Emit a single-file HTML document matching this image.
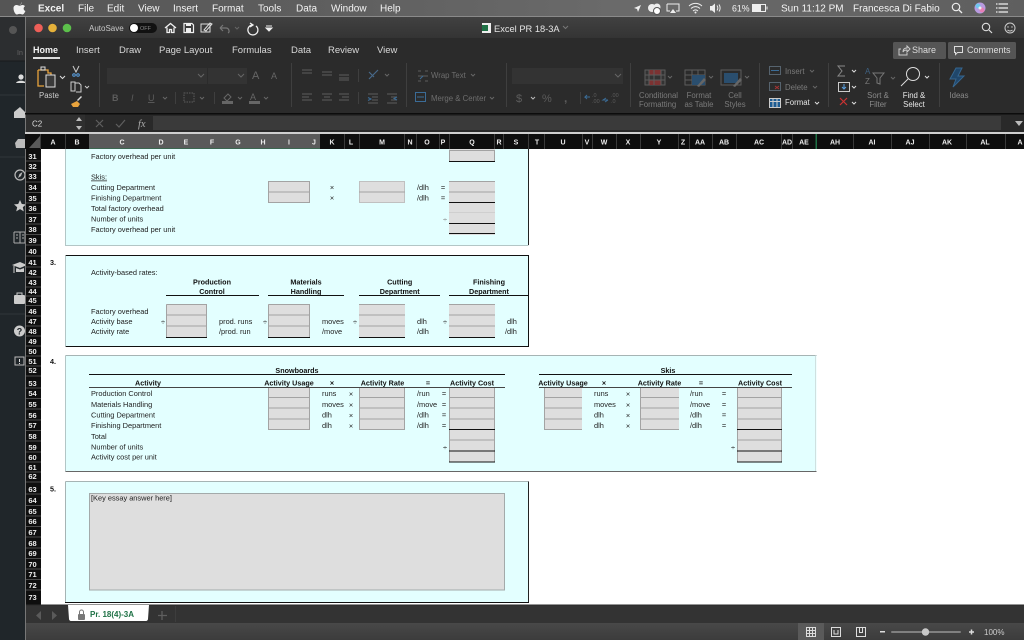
<!DOCTYPE html>
<html><head><meta charset="utf-8"><title>Excel PR 18-3A</title>
<style>
html,body{margin:0;padding:0;width:1024px;height:640px;overflow:hidden;background:#fff}
svg{display:block;position:absolute;left:0;top:0}
text{font-family:"Liberation Sans",sans-serif}
.m{font-size:10px;fill:#f4f4f4}
.tab{font-size:9.500px;fill:#d8d8d8}
.rb{font-size:7.800px;fill:#b8b8b8}
.dim{font-size:7.500px;fill:#7a7a7a}
.ch{font-size:7px;font-weight:bold;fill:#eee;text-anchor:middle}
.rn{font-size:7.500px;font-weight:bold;fill:#eee;text-anchor:middle}
.t{font-size:7.400px;fill:#222}
.c{font-size:7.400px;fill:#222;text-anchor:middle}
.b{font-size:7.200px;fill:#111;font-weight:bold}
.bc{font-size:7.200px;fill:#111;font-weight:bold;text-anchor:middle}
.cell{fill:#dedede}
.g{stroke:#a3a3a3;stroke-width:1;fill:none}
.k{stroke:#111;stroke-width:1;fill:none}
</style></head><body>
<svg width="1024" height="640" viewBox="0 0 1024 640" xmlns="http://www.w3.org/2000/svg">
<defs>
<linearGradient id="menu" x1="0" x2="1" y1="0" y2="0"><stop offset="0" stop-color="#555"/><stop offset=".3" stop-color="#5e5e5e"/><stop offset=".6" stop-color="#6a6a6a"/><stop offset="1" stop-color="#5f5f5f"/></linearGradient>
<linearGradient id="title" x1="0" x2="0" y1="0" y2="1"><stop offset="0" stop-color="#414141"/><stop offset="1" stop-color="#343434"/></linearGradient>
<linearGradient id="stat" x1="0" x2="0" y1="0" y2="1"><stop offset="0" stop-color="#484848"/><stop offset="1" stop-color="#3c3c3c"/></linearGradient>
</defs>

<!-- background sidebar -->
<rect x="0" y="17" width="25" height="623" fill="#20262a"/>
<rect x="0" y="17" width="25" height="44" fill="#2c2e30"/>
<circle cx="13" cy="30" r="4" fill="#555"/>
<text x="17" y="55" style="font-size:7px;fill:#666">In</text>
<line x1="0" y1="61" x2="25" y2="61" stroke="#171a1c"/>
<line x1="0" y1="95" x2="25" y2="95" stroke="#30363a"/>
<line x1="0" y1="157" x2="25" y2="157" stroke="#30363a"/>
<line x1="0" y1="314" x2="25" y2="314" stroke="#30363a"/>
<circle cx="21" cy="77" r="2.600" fill="#ddd"/><path d="M16 83c1-3 9-3 10 0z" fill="#ddd"/>
<path d="M14 112l6-5 5 5v6h-11z" fill="#ccc"/>
<path d="M15 143l3-4h7v9h-9z" fill="#bbb"/>
<circle cx="20" cy="175" r="5" fill="none" stroke="#bbb" stroke-width="1.200"/><path d="M18 178l1.500-4 3-2-1.500 4z" fill="#bbb"/>
<path d="M20 200l1.800 4 4.200.4-3.200 2.800 1 4.200-3.800-2.300-3.800 2.300 1-4.200-3.200-2.800 4.200-.4z" fill="#ccc"/>
<path d="M20 232v11M14 232h6M14 243h6M14 232v11M20 232h5v11h-5M16 235h2M16 238h2M22 235h2M22 238h2" stroke="#aaa" stroke-width="1" fill="none"/>
<path d="M12 265l8-3 7 3-7 3z" fill="#ccc"/><path d="M16 268v4h8v-4l-4 1.500z" fill="#ccc"/><path d="M14 266v7" stroke="#ccc"/>
<rect x="14" y="295" width="11" height="9" rx="1" fill="#ccc"/><rect x="17" y="293" width="5" height="3" fill="none" stroke="#ccc"/>
<circle cx="19.500" cy="331" r="5.500" fill="#ccc"/><text x="19.500" y="334.500" text-anchor="middle" style="font-size:9px;font-weight:bold;fill:#20262a">?</text>
<rect x="15" y="357" width="9" height="8" fill="none" stroke="#bbb"/><path d="M19.500 359v3M19.500 363v1" stroke="#ddd"/>

<!-- menu bar -->
<rect width="1024" height="17" fill="url(#menu)"/>
<line x1="0" y1="16.500" x2="1024" y2="16.500" stroke="#8a8a8a"/>
<path d="M19.500 4.500c1.200-.3 2.300-1.400 2.500-2.800.3 1.500-1.100 3-2.500 2.800zM16.500 5c1.400 0 2.100.7 3.100.7s1.800-.8 3.100-.7c1 0 1.800.5 2.300 1.200-2 1.300-1.700 4 .4 4.800-.6 1.600-1.800 3.500-2.900 3.500-1 0-1.500-.6-2.800-.6s-1.800.6-2.800.6c-1.600 0-3.400-3.500-3.400-6.300 0-2 1.400-3.200 3-3.200z" fill="#f2f2f2"/>
<text x="38" y="11.500" class="m" style="font-weight:bold">Excel</text>
<text x="78" y="11.500" class="m">File</text>
<text x="107" y="11.500" class="m">Edit</text>
<text x="138" y="11.500" class="m">View</text>
<text x="173" y="11.500" class="m">Insert</text>
<text x="212" y="11.500" class="m">Format</text>
<text x="258" y="11.500" class="m">Tools</text>
<text x="296" y="11.500" class="m">Data</text>
<text x="331" y="11.500" class="m">Window</text>
<text x="380" y="11.500" class="m">Help</text>
<path d="M634 8l7-3-3 7-1-3z" fill="#eee"/>
<circle cx="652" cy="8" r="4" fill="#eee"/><circle cx="657" cy="7" r="3.500" fill="#eee"/><circle cx="657" cy="11" r="3.500" fill="#fff" stroke="#555"/>
<path d="M667 4h12v7h-3M670 11h-3v-7" stroke="#eee" fill="none"/><path d="M670 13l3-4 3 4z" fill="#eee"/>
<path d="M689 6c4-3.500 9-3.500 13 0M691 8.500c3-2.500 6-2.500 9 0M693 11c2-1.500 3-1.500 5 0" stroke="#eee" fill="none"/><circle cx="695.500" cy="12.500" r="1" fill="#eee"/>
<path d="M710 6h2l3-2.500v9.500l-3-2.500h-2z" fill="#eee"/><path d="M717 5.500c1 1.500 1 3.500 0 5M719 4.500c1.500 2 1.500 5 0 7" stroke="#eee" fill="none"/>
<text x="732" y="11.500" class="m" style="font-size:8.800px">61%</text>
<rect x="752.500" y="4.500" width="13" height="7" fill="none" stroke="#eee"/><rect x="753" y="5" width="8" height="6" fill="#eee"/><rect x="766.500" y="6.500" width="1" height="3" fill="#eee"/>
<text x="781" y="11.500" class="m">Sun 11:12 PM</text>
<text x="853" y="11.500" class="m">Francesca Di Fabio</text>
<circle cx="956" cy="7" r="3.700" fill="none" stroke="#eee" stroke-width="1.200"/><path d="M959 10l3 3" stroke="#eee" stroke-width="1.300"/>
<circle cx="980" cy="8" r="5.500" fill="#b89be0"/><circle cx="978" cy="6" r="2.500" fill="#6fc6ef"/><circle cx="982" cy="10" r="2.500" fill="#e77fb5"/><circle cx="980" cy="8" r="1.500" fill="#eee"/>
<path d="M996 4h12M996 8h12M996 12h12" stroke="#eee" stroke-width="1.200" stroke-dasharray="1.500 1 10"/>

<!-- title bar -->
<rect x="25" y="17" width="999" height="21" fill="url(#title)"/>
<rect x="25" y="38" width="999" height="75" fill="#2b2b2b"/>
<line x1="25.500" y1="17" x2="25.500" y2="640" stroke="#777"/>
<circle cx="38.500" cy="28" r="4.300" fill="#ee5f58"/><circle cx="52.500" cy="28" r="4.300" fill="#e5b13a"/><circle cx="67" cy="28" r="4.300" fill="#5cc04b"/>
<text x="89" y="31" style="font-size:8px;fill:#c8c8c8">AutoSave</text>
<rect x="129" y="23" width="28" height="10" rx="5" fill="#111"/><circle cx="134" cy="28" r="4" fill="#fff"/><text x="140" y="30.200" style="font-size:5.500px;fill:#888">OFF</text>
<path d="M165 28l5.500-4.500 5.500 4.500M167 27.500v5h2.500v-3h2v3h2.500v-5" stroke="#f0f0f0" stroke-width="1.300" fill="none"/>
<path d="M184 23.500h8l1.500 1.500v7.500h-9.500z" stroke="#f0f0f0" stroke-width="1.200" fill="none"/><rect x="186" y="28" width="5" height="4" fill="#f0f0f0"/><rect x="186" y="24" width="5" height="2" fill="#f0f0f0"/>
<path d="M201 24h9v8h-9zM204 30l6-7 2 1-6 7z" stroke="#ddd" stroke-width="1" fill="none"/>
<path d="M220 28l3-3M220 28l3 3M220 28h6c3 0 4 4 2 5" stroke="#777" stroke-width="1.200" fill="none"/><path d="M235 27l2 2 2-2" stroke="#666" fill="none"/>
<path d="M252 25a5 5 0 1 0 4 1M250 23l3 2-3 2" stroke="#f0f0f0" stroke-width="1.300" fill="none"/>
<path d="M266 26h6M266 28l3 3 3-3z" stroke="#eee" fill="#eee"/>
<rect x="482" y="23" width="9" height="10" fill="#eee"/><rect x="482" y="25" width="6" height="6" fill="#1e7145"/>
<text x="494" y="32" style="font-size:9.300px;fill:#e4e4e4">Excel PR 18-3A</text>
<path d="M563 26l2.500 2.500 2.500-2.500" stroke="#777" fill="none"/>
<circle cx="986" cy="27" r="3.700" fill="none" stroke="#ddd" stroke-width="1.100"/><path d="M989 30l3 3" stroke="#ddd" stroke-width="1.200"/>
<circle cx="1010" cy="28" r="5" fill="none" stroke="#ccc"/><circle cx="1008" cy="27" r=".7" fill="#ccc"/><circle cx="1012" cy="27" r=".7" fill="#ccc"/><path d="M1007.500 30c1.500 1.200 3.500 1.200 5 0" stroke="#ccc" fill="none"/>

<!-- tabs -->
<text x="33" y="53" class="tab" style="font-weight:bold;font-size:9px;fill:#f2f2f2">Home</text>
<rect x="33" y="57" width="27" height="2" fill="#ddd"/>
<text x="76" y="53" class="tab">Insert</text>
<text x="119" y="53" class="tab">Draw</text>
<text x="159" y="53" class="tab">Page Layout</text>
<text x="232" y="53" class="tab">Formulas</text>
<text x="291" y="53" class="tab">Data</text>
<text x="328" y="53" class="tab">Review</text>
<text x="377" y="53" class="tab">View</text>
<rect x="893" y="42" width="53" height="17" rx="1.500" fill="#555"/>
<path d="M901 49h-2v6h8v-2M903 52c0-3 2-4 4-4v-2l3 3-3 3v-2c-1 0-3 0-4 2z" stroke="#ccc" fill="none"/>
<text x="912" y="53" class="tab" style="font-size:9px;fill:#ddd">Share</text>
<rect x="948" y="42" width="68" height="17" rx="1.500" fill="#555"/>
<path d="M954.500 46.500h8v6h-5l-2 2v-2h-1z" stroke="#ddd" fill="none"/>
<text x="967" y="53" class="tab" style="font-size:9px;fill:#ddd">Comments</text>

<!-- ribbon: clipboard -->
<path d="M38 70h10v3h3v6M38 70v16h6" stroke="#e8a33d" stroke-width="1.300" fill="none"/><rect x="41" y="67" width="4" height="3" fill="none" stroke="#ddd"/>
<rect x="46" y="75" width="9" height="12" fill="#3a3a3a" stroke="#ddd"/>
<path d="M60 76l2.500 2.500 2.500-2.500" stroke="#ddd" fill="none"/>
<text x="39" y="98" class="rb" style="fill:#ccc">Paste</text>
<path d="M73 66l3 6 3-6M79 66l-3 6" stroke="#ccc" fill="none"/><circle cx="74" cy="75" r="1.300" fill="none" stroke="#5aa0e0"/><circle cx="78" cy="75" r="1.300" fill="none" stroke="#5aa0e0"/>
<path d="M71 82h4v9h-4zM75 83h4l2 2v7h-5" stroke="#ccc" fill="none"/><path d="M85 86l2 2 2-2" stroke="#ccc" fill="none"/>
<path d="M71 104l6-3 3 3-2 3h-5z" fill="#e8a33d"/><path d="M77 100l4-4 1 1-4 4z" fill="#ddd"/>
<line x1="99.500" y1="63" x2="99.500" y2="107" stroke="#3f3f3f"/>
<!-- font -->
<rect x="107" y="68" width="100" height="16" fill="#333"/><rect x="208" y="68" width="39" height="16" fill="#333"/>
<path d="M198 74l3 3 3-3M238 74l3 3 3-3" stroke="#666" fill="none"/>
<text x="252" y="79" class="dim" style="font-size:11px;fill:#666">A</text><text x="271" y="79" class="dim" style="font-size:9px;fill:#666">A</text>
<text x="112" y="101" class="dim" style="font-size:9px;font-weight:bold;fill:#5c5c5c">B</text>
<text x="131" y="101" class="dim" style="font-size:9px;font-style:italic;fill:#5c5c5c">I</text>
<text x="148" y="101" class="dim" style="font-size:9px;text-decoration:underline;fill:#5c5c5c">U</text>
<path d="M163 97l2 2 2-2M200 97l2 2 2-2M238 97l2 2 2-2M264 97l2 2 2-2" stroke="#666" fill="none"/>
<line x1="175.500" y1="92" x2="175.500" y2="104" stroke="#3f3f3f"/>
<rect x="184" y="93" width="10" height="9" stroke="#5c5c5c" stroke-dasharray="1.500 1" fill="none"/>
<line x1="214.500" y1="92" x2="214.500" y2="104" stroke="#3f3f3f"/>
<path d="M224 98l4-4 3 3-4 4z" fill="none" stroke="#666"/><rect x="222" y="101" width="11" height="3" fill="#666"/>
<text x="250" y="100" style="font-size:9px;fill:#666">A</text><rect x="249" y="101" width="11" height="3" fill="#666"/>
<line x1="291.500" y1="63" x2="291.500" y2="107" stroke="#3f3f3f"/>
<!-- alignment -->
<path d="M302 70h10M302 73h10M322 72h10M322 75h10M339 75h10M339 78h10M339 80h10" stroke="#5c5c5c" fill="none"/>
<path d="M302 94h10M302 97h7M302 100h10M322 94h10M324 97h6M322 100h10M339 94h10M342 97h7M339 100h10" stroke="#5c5c5c" fill="none"/>
<line x1="358.500" y1="69" x2="358.500" y2="82" stroke="#3f3f3f"/><line x1="358.500" y1="92" x2="358.500" y2="104" stroke="#3f3f3f"/>
<path d="M369 79l9-9M369 72l5 5" stroke="#47698a" stroke-width="1.200" fill="none"/><path d="M385 74l2 2 2-2" stroke="#666" fill="none"/>
<path d="M368 94h10M372 97h6M372 100h6M368 103h10M387 94h10M391 97h6M391 100h6M387 103h10" stroke="#5c5c5c" fill="none"/><path d="M368 97.500l3 1.500-3 1.500M397 97l-3 1.500 3 1.500" stroke="#3b6c97" fill="none"/>
<line x1="406.500" y1="63" x2="406.500" y2="107" stroke="#3f3f3f"/>
<path d="M418 71h3M425 71h3M418 81h3M425 81h3M418 76h10" stroke="#5c5c5c" fill="none"/><path d="M423 76l-3 3" stroke="#3b6c97" fill="none"/>
<text x="431" y="78" class="rb" style="fill:#6e6e6e">Wrap Text</text>
<path d="M471 74l2 2 2-2" stroke="#666" fill="none"/>
<rect x="415.500" y="92.500" width="10" height="9" stroke="#3b6c97" fill="none"/><path d="M417 97h7" stroke="#3b6c97"/>
<text x="431" y="101" class="rb" style="fill:#6e6e6e">Merge &amp; Center</text>
<path d="M490 97l2 2 2-2" stroke="#666" fill="none"/>
<line x1="506.500" y1="63" x2="506.500" y2="107" stroke="#3f3f3f"/>
<!-- number -->
<rect x="512" y="68" width="111" height="16" fill="#333"/><path d="M615 74l3 3 3-3" stroke="#666" fill="none"/>
<text x="516" y="102" style="font-size:11px;fill:#5c5c5c">$</text><path d="M531 97l2 2 2-2" stroke="#bbb" fill="none"/>
<text x="542" y="102" style="font-size:11px;fill:#5c5c5c">%</text><text x="564" y="102" style="font-size:12px;font-weight:bold;fill:#5c5c5c">,</text>
<line x1="580.500" y1="92" x2="580.500" y2="104" stroke="#3f3f3f"/>
<path d="M590 97h-5l2-2M585 97l2 2M608 100h-5l3-2M608 100l-3 2" stroke="#3b6c97" fill="none"/>
<text x="592" y="97" style="font-size:5.500px;fill:#5c5c5c">.0</text><text x="592" y="103" style="font-size:5.500px;fill:#5c5c5c">.00</text>
<text x="611" y="97" style="font-size:5.500px;fill:#5c5c5c">.00</text><text x="611" y="103" style="font-size:5.500px;fill:#5c5c5c">.0</text>
<line x1="630.500" y1="63" x2="630.500" y2="107" stroke="#3f3f3f"/>
<!-- styles -->
<rect x="645" y="70" width="20" height="15" fill="#333" stroke="#5c5c5c"/><rect x="649" y="70" width="12" height="5" fill="#7c3232"/><rect x="649" y="80" width="12" height="5" fill="#7c3232"/><path d="M645 75h20M645 80h20M649 70v15M654 70v15M661 70v15" stroke="#5c5c5c" fill="none"/>
<path d="M668 76l2 2 2-2M709 76l2 2 2-2M745 76l2 2 2-2" stroke="#666" fill="none"/>
<rect x="685" y="70" width="20" height="15" fill="none" stroke="#5c5c5c"/><path d="M685 75h20M685 80h20M692 70v15M698 70v15" stroke="#5c5c5c"/><rect x="692" y="75" width="13" height="10" fill="#2a4e6e"/><path d="M697 86l7-8 2 2-7 7z" fill="#666"/>
<rect x="721" y="70" width="20" height="15" fill="none" stroke="#5c5c5c"/><rect x="724" y="73" width="14" height="10" fill="#2a4e6e"/><path d="M733 86l7-8 2 2-7 7z" fill="#666"/>
<text x="639" y="98" class="rb" style="fill:#7a7a7a">Conditional</text><text x="639" y="107" class="rb" style="fill:#7a7a7a">Formatting</text>
<text x="699" y="98" class="rb" text-anchor="middle" style="fill:#7a7a7a">Format</text><text x="699" y="107" class="rb" text-anchor="middle" style="fill:#7a7a7a">as Table</text>
<text x="735" y="98" class="rb" text-anchor="middle" style="fill:#7a7a7a">Cell</text><text x="735" y="107" class="rb" text-anchor="middle" style="fill:#7a7a7a">Styles</text>
<line x1="759.500" y1="63" x2="759.500" y2="107" stroke="#3f3f3f"/>
<rect x="769.500" y="66.500" width="11" height="8" fill="none" stroke="#56636e"/><path d="M771 70.500h8" stroke="#3b6c97"/>
<text x="785" y="74" class="rb" style="fill:#7a7a7a">Insert</text><path d="M810 70l2 2 2-2" stroke="#666" fill="none"/>
<rect x="769.500" y="82.500" width="11" height="8" fill="none" stroke="#56636e"/><path d="M775 86l4 3M779 86l-4 3" stroke="#a33"/>
<text x="785" y="90" class="rb" style="fill:#7a7a7a">Delete</text><path d="M813 86l2 2 2-2" stroke="#666" fill="none"/>
<rect x="769.500" y="98.500" width="11" height="9" fill="#1c5b92" stroke="#ccc"/><path d="M769.500 101.500h11M773 98v9M777 98v9" stroke="#ccc"/>
<text x="785" y="105" class="rb" style="fill:#e4e4e4">Format</text><path d="M815 102l2 2 2-2" stroke="#ddd" fill="none"/>
<line x1="828.500" y1="63" x2="828.500" y2="107" stroke="#3f3f3f"/>
<path d="M845 66h-7l4 5-4 5h7" stroke="#888" fill="none"/><path d="M852 70l2 2 2-2M852 86l2 2 2-2M852 102l2 2 2-2" stroke="#ddd" fill="none"/>
<rect x="838.500" y="82.500" width="11" height="9" fill="none" stroke="#ccc"/><path d="M844 84v5M842 87l2 2 2-2" stroke="#5aa0e0" fill="none"/>
<path d="M840 98l7 7M847 98l-7 7" stroke="#c33" stroke-width="1.200"/>
<text x="865" y="74" style="font-size:8px;fill:#3f6181">A</text><text x="865" y="84" style="font-size:8px;fill:#777">Z</text>
<path d="M873 73h11l-4 5v6l-3-1v-5z" stroke="#777" fill="none"/><path d="M891 77l2 2 2-2" stroke="#666" fill="none"/>
<text x="878" y="98" class="rb" text-anchor="middle" style="fill:#8a8a8a">Sort &amp;</text><text x="878" y="107" class="rb" text-anchor="middle" style="fill:#8a8a8a">Filter</text>
<circle cx="913" cy="74" r="6.500" fill="none" stroke="#ddd"/><path d="M908 79l-7 7" stroke="#ddd"/>
<path d="M925 76l2 2 2-2" stroke="#ddd" fill="none"/>
<text x="914" y="98" class="rb" text-anchor="middle" style="fill:#e8e8e8">Find &amp;</text><text x="914" y="107" class="rb" text-anchor="middle" style="fill:#e8e8e8">Select</text>
<line x1="939.500" y1="63" x2="939.500" y2="107" stroke="#3f3f3f"/>
<path d="M962 68h-6l-6 11h6l-3 8 11-11h-6z" fill="#20476b" stroke="#36668f"/>
<text x="959" y="98" class="rb" text-anchor="middle" style="fill:#8a8a8a">Ideas</text>

<!-- formula bar -->
<rect x="25" y="113" width="999" height="1.500" fill="#0c0c0c"/>
<rect x="26" y="114.500" width="998" height="18" fill="#292929"/>
<rect x="26" y="114.500" width="59" height="18" fill="#2f2f2f"/>
<text x="32" y="126.500" style="font-size:8px;fill:#ddd">C2</text>
<path d="M76 121l3-4 3 4zM76 126l3 4 3-4z" fill="#bbb"/>
<path d="M96 120l7 7M103 120l-7 7" stroke="#5f5f5f" stroke-width="1.200"/>
<path d="M116 124l3 3 6-7" stroke="#5f5f5f" stroke-width="1.200" fill="none"/>
<text x="138" y="127" style="font-family:'Liberation Serif',serif;font-size:10.500px;font-style:italic;fill:#aaa">fx</text>
<rect x="153" y="116" width="848" height="14" fill="#3a3a3a"/>
<path d="M1015 121h8l-4 5z" fill="#bbb"/>
<rect x="25" y="132" width="999" height="2" fill="#cfcfcf"/>

<!-- column headers -->
<rect x="25" y="134" width="999" height="15" fill="#0e0e0e"/>
<path d="M29 148l11-12v12z" fill="#5a5a5a"/>
<rect x="89" y="134" width="231" height="15" fill="#5a5a5a"/>
<rect x="89" y="148.500" width="231" height="1.500" fill="#1e7145"/>
<g stroke="#3b3b3b"><path d="M40.500 134v15M65.500 134v15M344.500 134v15M359.500 134v15M404.500 134v15M416.500 134v15M439.500 134v15M449.500 134v15M494.500 134v15M503.500 134v15M528.500 134v15M544.500 134v15M582.500 134v15M592.500 134v15M616.500 134v15M640.500 134v15M678.500 134v15M689.500 134v15M712.500 134v15M736.500 134v15M781.500 134v15M792.500 134v15M853.500 134v15M891.500 134v15M929.500 134v15M966.500 134v15M1005.500 134v15"/></g>
<rect x="815.500" y="134" width="1.500" height="15" fill="#1e7145"/>
<text x="53" y="144.500" class="ch">A</text><text x="77" y="144.500" class="ch">B</text><text x="122" y="144.500" class="ch">C</text><text x="161" y="144.500" class="ch">D</text><text x="186" y="144.500" class="ch">E</text><text x="212" y="144.500" class="ch">F</text><text x="238" y="144.500" class="ch">G</text><text x="263" y="144.500" class="ch">H</text><text x="289" y="144.500" class="ch">I</text><text x="314" y="144.500" class="ch">J</text><text x="332" y="144.500" class="ch">K</text><text x="351" y="144.500" class="ch">L</text><text x="382" y="144.500" class="ch">M</text><text x="410" y="144.500" class="ch">N</text><text x="427" y="144.500" class="ch">O</text><text x="443" y="144.500" class="ch">P</text><text x="472" y="144.500" class="ch">Q</text><text x="499" y="144.500" class="ch">R</text><text x="516" y="144.500" class="ch">S</text><text x="537" y="144.500" class="ch">T</text><text x="563" y="144.500" class="ch">U</text><text x="587" y="144.500" class="ch">V</text><text x="604" y="144.500" class="ch">W</text><text x="628" y="144.500" class="ch">X</text><text x="659" y="144.500" class="ch">Y</text><text x="683" y="144.500" class="ch">Z</text><text x="700" y="144.500" class="ch">AA</text><text x="724" y="144.500" class="ch">AB</text><text x="759" y="144.500" class="ch">AC</text><text x="787" y="144.500" class="ch">AD</text><text x="804" y="144.500" class="ch">AE</text><text x="835" y="144.500" class="ch">AH</text><text x="872" y="144.500" class="ch">AI</text><text x="910" y="144.500" class="ch">AJ</text><text x="947" y="144.500" class="ch">AK</text><text x="985" y="144.500" class="ch">AL</text><text x="1020" y="144.500" class="ch">A</text>

<!-- sheet -->
<rect x="41" y="149" width="983" height="456" fill="#fff"/>
<rect x="26" y="149" width="15" height="456" fill="#0e0e0e"/>
<g stroke="#4a4a4a"><path d="M26 161h15M26 171h15M26 182h15M26 192.500h15M26 203h15M26 213.500h15M26 224h15M26 234.500h15M26 245h15M26 256h15M26 267h15M26 277h15M26 287h15M26 296h15M26 305.500h15M26 316h15M26 326h15M26 336h15M26 346h15M26 356h15M26 366h15M26 376h15M26 388h15M26 398.500h15M26 409h15M26 420h15M26 430.500h15M26 441h15M26 452h15M26 462h15M26 472h15M26 482h15M26 494h15M26 505.500h15M26 516h15M26 526.500h15M26 537h15M26 548h15M26 558.500h15M26 569h15M26 579.500h15M26 590h15"/></g>
<text x="32.500" y="159" class="rn">31</text><text x="32.500" y="169" class="rn">32</text><text x="32.500" y="179" class="rn">33</text><text x="32.500" y="190" class="rn">34</text><text x="32.500" y="201" class="rn">35</text><text x="32.500" y="211" class="rn">36</text><text x="32.500" y="222" class="rn">37</text><text x="32.500" y="232" class="rn">38</text><text x="32.500" y="243" class="rn">39</text><text x="32.500" y="254" class="rn">40</text><text x="32.500" y="265" class="rn">41</text><text x="32.500" y="275" class="rn">42</text><text x="32.500" y="285" class="rn">43</text><text x="32.500" y="294" class="rn">44</text><text x="32.500" y="303" class="rn">45</text><text x="32.500" y="314" class="rn">46</text><text x="32.500" y="324" class="rn">47</text><text x="32.500" y="334" class="rn">48</text><text x="32.500" y="344" class="rn">49</text><text x="32.500" y="354" class="rn">50</text><text x="32.500" y="364" class="rn">51</text><text x="32.500" y="373" class="rn">52</text><text x="32.500" y="386" class="rn">53</text><text x="32.500" y="396" class="rn">54</text><text x="32.500" y="407" class="rn">55</text><text x="32.500" y="418" class="rn">56</text><text x="32.500" y="428" class="rn">57</text><text x="32.500" y="439" class="rn">58</text><text x="32.500" y="450" class="rn">59</text><text x="32.500" y="460" class="rn">60</text><text x="32.500" y="470" class="rn">61</text><text x="32.500" y="479" class="rn">62</text><text x="32.500" y="492" class="rn">63</text><text x="32.500" y="503" class="rn">64</text><text x="32.500" y="514" class="rn">65</text><text x="32.500" y="524" class="rn">66</text><text x="32.500" y="535" class="rn">67</text><text x="32.500" y="546" class="rn">68</text><text x="32.500" y="556" class="rn">69</text><text x="32.500" y="567" class="rn">70</text><text x="32.500" y="577" class="rn">71</text><text x="32.500" y="588" class="rn">72</text><text x="32.500" y="600" class="rn">73</text>

<!-- panel 1 -->
<rect x="65.500" y="149" width="463" height="96" fill="#e3ffff"/>
<path d="M65.500 149v96.500h463" stroke="#b3c6c6" fill="none"/><path d="M528.500 149v96" stroke="#222" fill="none"/>
<text x="91" y="159" class="t">Factory overhead per unit</text>
<text x="91" y="179.500" class="t" style="text-decoration:underline">Skis:</text>
<text x="91" y="190" class="t">Cutting Department</text>
<text x="91" y="200.500" class="t">Finishing Department</text>
<text x="91" y="211" class="t">Total factory overhead</text>
<text x="91" y="221.500" class="t">Number of units</text>
<text x="91" y="232" class="t">Factory overhead per unit</text>
<rect x="449" y="149" width="46" height="12" class="cell"/>
<path d="M449 150.500h46" class="g"/><path d="M449 161.500h46" class="k"/><path d="M449.500 150v11M494.500 150v11" class="g"/>
<rect x="268" y="181" width="42" height="22" class="cell"/><rect x="268.500" y="181.500" width="41" height="21" class="g"/><path d="M268 192h42" class="g"/>
<rect x="359" y="181" width="46" height="22" class="cell"/><rect x="359.500" y="181.500" width="45" height="21" class="g" style="stroke:#c0c0c0"/><path d="M359 192h46" class="g"/>
<rect x="449" y="181" width="46" height="54" class="cell"/>
<path d="M449 181.500h46M449 192h46" class="g"/><path d="M449 212.500h46" style="stroke:#cfcfcf" fill="none"/><path d="M449 202.500h46M449 223.500h46M449 233.500h46" class="k"/>
<text x="332" y="190" class="c">×</text><text x="332" y="200.500" class="c">×</text>
<text x="417" y="190" class="t">/dlh</text><text x="417" y="200.500" class="t">/dlh</text>
<text x="443" y="190" class="c">=</text><text x="443" y="200.500" class="c">=</text>
<text x="445" y="222" class="c" style="fill:#888">÷</text>

<!-- panel 3 -->
<rect x="65.500" y="255.500" width="463" height="91" fill="#e3ffff"/>
<path d="M65.500 255.500h463v91h-463" class="k"/><path d="M65.500 255.500v91" stroke="#b3c6c6"/>
<text x="50" y="265" class="b">3.</text>
<text x="91" y="275" class="t">Activity-based rates:</text>
<text x="212" y="284.500" class="bc">Production</text><text x="212" y="294" class="bc">Control</text>
<text x="306" y="284.500" class="bc">Materials</text><text x="306" y="294" class="bc">Handling</text>
<text x="399.700" y="284.500" class="bc">Cutting</text><text x="399.700" y="294" class="bc">Department</text>
<text x="489" y="284.500" class="bc">Finishing</text><text x="489" y="294" class="bc">Department</text>
<path d="M166 295.500h93M268 295.500h76M359 295.500h81M449 295.500h79" class="k"/>
<text x="91" y="314" class="t">Factory overhead</text><text x="91" y="324" class="t">Activity base</text><text x="91" y="334" class="t">Activity rate</text>
<rect x="166" y="304" width="41" height="33" class="cell"/><rect x="268" y="304" width="42" height="33" class="cell"/><rect x="359" y="304" width="46" height="33" class="cell"/><rect x="449" y="304" width="46" height="33" class="cell"/>
<path d="M166.500 304.500h40v33M166.500 304.500v33M166 315h41M166 326h41M268.500 304.500h41v33M268.500 304.500v33M268 315h42M268 326h42M359 304.500h46M359 315h46M359 326h46M449 304.500h46M449 315h46M449 326h46" class="g"/>
<path d="M166 337.500h41M268 337.500h42M359 337.500h46M449 337.500h46" class="k"/>
<text x="163" y="324.500" class="c">÷</text><text x="265" y="324.500" class="c">÷</text><text x="355" y="324.500" class="c">÷</text><text x="445" y="324.500" class="c">÷</text>
<text x="219" y="324" class="t">prod. runs</text><text x="219" y="334" class="t">/prod. run</text>
<text x="322" y="324" class="t">moves</text><text x="322" y="334" class="t">/move</text>
<text x="417" y="324" class="t">dlh</text><text x="417" y="334" class="t">/dlh</text>
<text x="507" y="324" class="t">dlh</text><text x="505" y="334" class="t">/dlh</text>

<!-- panel 4 -->
<rect x="65.500" y="355.500" width="751" height="116" fill="#e3ffff"/>
<path d="M65.500 355.500h751" stroke="#a6b4b4" fill="none"/><path d="M65.500 355.500v116" stroke="#b3c6c6"/><path d="M815.500 355.500v116" stroke="#cfe0e0"/><path d="M65.500 471.500h751" stroke="#666" fill="none"/>
<text x="50" y="364" class="b">4.</text>
<text x="297" y="373" class="bc">Snowboards</text><text x="668" y="373" class="bc">Skis</text>
<path d="M89 374.500h416M539 374.500h253" class="k"/>
<path d="M89 387.500h416M539 387.500h253" stroke="#444" fill="none"/>
<text x="148" y="385.500" class="bc">Activity</text><text x="289" y="385.500" class="bc">Activity Usage</text><text x="332" y="385.500" class="bc">×</text><text x="382.500" y="385.500" class="bc">Activity Rate</text><text x="428" y="385.500" class="bc">=</text><text x="472" y="385.500" class="bc">Activity Cost</text>
<text x="563" y="385.500" class="bc">Activity Usage</text><text x="604" y="385.500" class="bc">×</text><text x="659.500" y="385.500" class="bc">Activity Rate</text><text x="701" y="385.500" class="bc">=</text><text x="760" y="385.500" class="bc">Activity Cost</text>
<text x="91" y="396" class="t">Production Control</text><text x="91" y="407" class="t">Materials Handling</text><text x="91" y="417.500" class="t">Cutting Department</text><text x="91" y="428" class="t">Finishing Department</text><text x="91" y="439" class="t">Total</text><text x="91" y="449.500" class="t">Number of units</text><text x="91" y="459.500" class="t">Activity cost per unit</text>
<rect x="268" y="388" width="42" height="42" class="cell"/><rect x="359" y="388" width="46" height="42" class="cell"/><rect x="449" y="388" width="46" height="74" class="cell"/><rect x="544" y="388" width="38" height="42" class="cell"/><rect x="640" y="388" width="39" height="42" class="cell"/><rect x="737" y="388" width="45" height="74" class="cell"/>
<path d="M268.500 388v42M309.500 388v42M268 397.500h42M268 408h42M268 419h42M268 429.500h42M359.500 388v42M404.500 388v42M359 397.500h46M359 408h46M359 419h46M359 429.500h46M449.500 388v74M494.500 388v74M449 397.500h46M449 408h46M449 419h46M449 440h46" class="g"/>
<path d="M544.500 388v42M582 397.500h-38M544 408h38M544 419h38M544 429.500h38M640.500 388v42M640 397.500h39M640 408h39M640 419h39M640 429.500h39M737.500 388v74M781.500 388v74M737 397.500h45M737 408h45M737 419h45M737 440h45" class="g"/>
<path d="M449 429.500h46M449 451h46M449 462h46M737 429.500h45M737 451h45M737 462h45" class="k"/>
<text x="322" y="396" class="t">runs</text><text x="322" y="407" class="t">moves</text><text x="322" y="417.500" class="t">dlh</text><text x="322" y="428" class="t">dlh</text>
<text x="351" y="396.500" class="c">×</text><text x="351" y="407.500" class="c">×</text><text x="351" y="418" class="c">×</text><text x="351" y="428.500" class="c">×</text>
<text x="417" y="396" class="t">/run</text><text x="417" y="407" class="t">/move</text><text x="417" y="417.500" class="t">/dlh</text><text x="417" y="428" class="t">/dlh</text>
<text x="444" y="396" class="c">=</text><text x="444" y="407" class="c">=</text><text x="444" y="417.500" class="c">=</text><text x="444" y="428" class="c">=</text><text x="445" y="450" class="c">÷</text>
<text x="594" y="396" class="t">runs</text><text x="594" y="407" class="t">moves</text><text x="594" y="417.500" class="t">dlh</text><text x="594" y="428" class="t">dlh</text>
<text x="628" y="396.500" class="c">×</text><text x="628" y="407.500" class="c">×</text><text x="628" y="418" class="c">×</text><text x="628" y="428.500" class="c">×</text>
<text x="690" y="396" class="t">/run</text><text x="690" y="407" class="t">/move</text><text x="690" y="417.500" class="t">/dlh</text><text x="690" y="428" class="t">/dlh</text>
<text x="724" y="396" class="c">=</text><text x="724" y="407" class="c">=</text><text x="724" y="417.500" class="c">=</text><text x="724" y="428" class="c">=</text><text x="733" y="450" class="c">÷</text>

<!-- panel 5 -->
<rect x="65.500" y="481.500" width="463" height="121" fill="#e3ffff"/>
<path d="M65.500 481.500h463M65.500 481.500v121" stroke="#a6b4b4" fill="none"/><path d="M528.500 481.500v121" stroke="#222"/><path d="M65 602.500h464" class="k"/>
<text x="50" y="491.500" class="b">5.</text>
<rect x="89.500" y="493.500" width="415" height="96.500" fill="#dedede" stroke="#a3aaaa"/>
<text x="91" y="500.500" class="t">[Key essay answer here]</text>

<!-- sheet tabs -->
<rect x="26" y="605" width="998" height="18" fill="#333"/>
<line x1="26" y1="605" x2="1024" y2="605" stroke="#2a2a2a"/>
<path d="M41 611l-5 4.500 5 4.500zM52 611l5 4.500-5 4.500z" fill="#5a5a5a"/>
<path d="M68 605h81l-1 14c0 1-1 2-2 2h-75c-1 0-2-1-2-2z" fill="#fff"/>
<rect x="78" y="614" width="7" height="6" rx="1" fill="#777"/><path d="M79.500 614v-2a2 2 0 0 1 4 0v2" stroke="#777" fill="none"/>
<text x="90" y="617" style="font-size:8px;font-weight:bold;fill:#1e7145">Pr. 18(4)-3A</text>
<path d="M162 611v9M158 615.500h9" stroke="#5f5f5f" stroke-width="1.300"/>
<line x1="175.500" y1="606" x2="175.500" y2="622" stroke="#3d3d3d"/>

<!-- status bar -->
<rect x="26" y="623" width="998" height="17" fill="url(#stat)"/>
<rect x="798" y="623" width="26" height="17" fill="#5a5a5a"/>
<path d="M806.500 627.500h9v9h-9zM806.500 630.500h9M806.500 633.500h9M809.500 627.500v9M812.500 627.500v9" stroke="#ddd" fill="none"/>
<path d="M831.500 627.500h9v9h-9zM834 630v4h4v-4" stroke="#ddd" fill="none"/>
<path d="M856.500 627.500h9v9h-9zM859.500 627.500v5h3v-5" stroke="#ddd" fill="none"/>
<rect x="880" y="631" width="5" height="1.500" fill="#ddd"/>
<rect x="891" y="631" width="70" height="2" rx="1" fill="#808080"/>
<circle cx="925.500" cy="632" r="3.700" fill="#c8c8c8"/>
<path d="M969 632h5M971.500 629.500v5" stroke="#ddd" stroke-width="1.500"/>
<text x="984" y="635" style="font-size:8px;fill:#ccc">100%</text>
</svg>
</body></html>
